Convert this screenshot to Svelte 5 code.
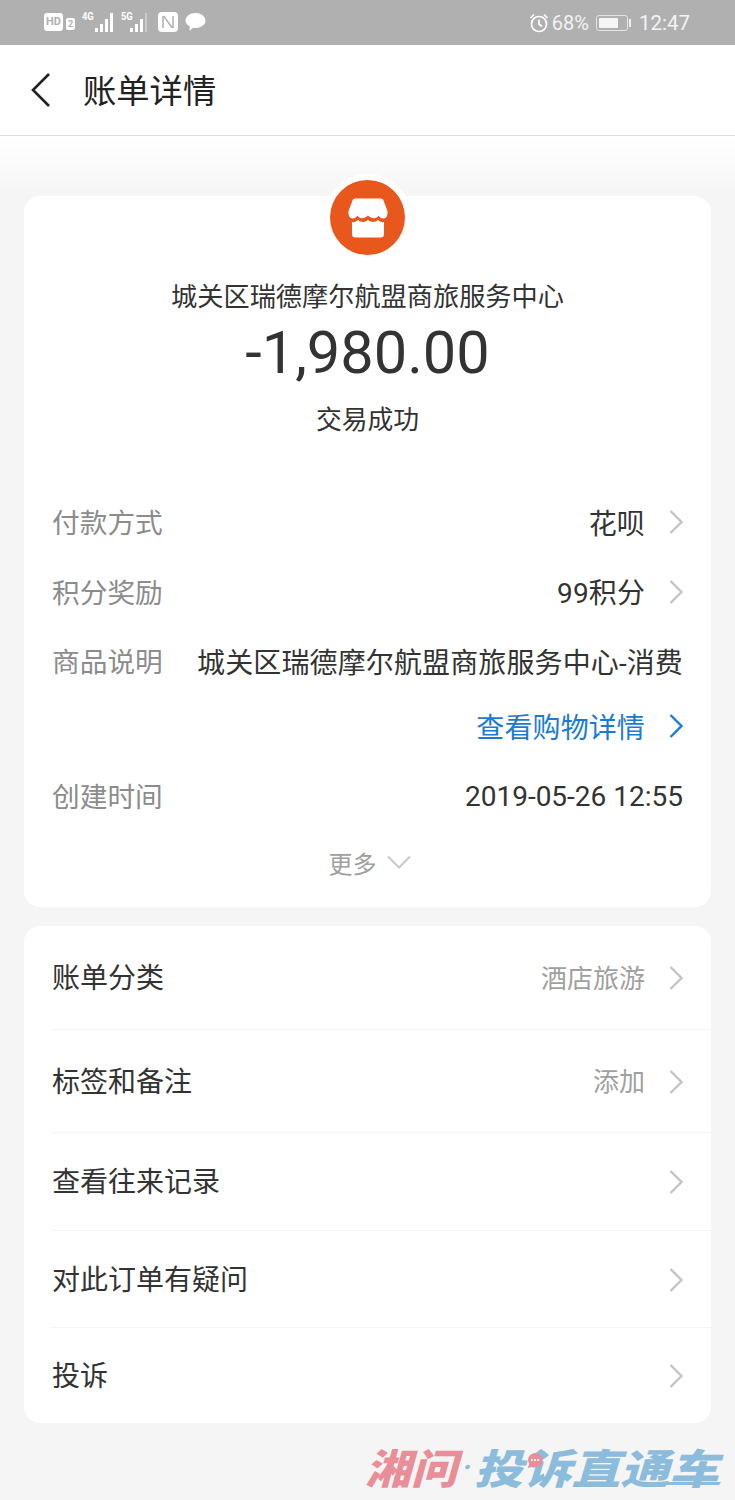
<script>
  const details = [
    { label: '付款方式', value: '花呗', arrow: true, h: 70 },
    { label: '积分奖励', value: '99积分', arrow: true, h: 69 },
    { label: '商品说明', value: '城关区瑞德摩尔航盟商旅服务中心-消费', arrow: false, h: 70 }
  ];
  const menu = [
    { label: '账单分类', value: '酒店旅游', h: 104 },
    { label: '标签和备注', value: '添加', h: 103 },
    { label: '查看往来记录', value: '', h: 98 },
    { label: '对此订单有疑问', value: '', h: 97 },
    { label: '投诉', value: '', h: 95 }
  ];
</script>

{#snippet chevron(cls)}
  <svg class="chev {cls}" viewBox="0 0 16 26" width="16" height="26" aria-hidden="true">
    <path d="M2.500 2 L13.500 13 L2.500 24" fill="none" stroke="currentColor" stroke-width="2.400" />
  </svg>
{/snippet}

<div class="page">
  <div class="status">
    <div class="status-left">
      <span class="hd">HD</span>
      <span class="sim">2</span>
      <span class="net"><i>4G</i>
        <svg viewBox="0 0 20 19" width="20" height="19"><path d="M0 15h3v4H0zM5 11h3v8H5zM10 6h3v13h-3zM15 0h3v19h-3z" fill="#fff"/></svg>
      </span>
      <span class="net second"><i>5G</i>
        <svg viewBox="0 0 20 19" width="20" height="19"><path d="M0 15h3v4H0zM5 11h3v8H5zM10 6h3v13h-3z" fill="#fff"/><path d="M15 0h2v19h-2z" fill="#fff" opacity=".35"/></svg>
      </span>
      <svg class="nfc" viewBox="0 0 20 20" width="20" height="20">
        <rect width="20" height="20" rx="4" fill="#fff"/>
        <path d="M5 4v12M15 4v12M6 4c2 4 6 8 8 12" fill="none" stroke="#b0b0b0" stroke-width="1.500"/>
      </svg>
      <svg class="msg" viewBox="0 0 21 20" width="21" height="20">
        <path d="M10.500 1C16 1 20.500 4.300 20.500 8.500S16 16 10.500 16C9.500 16 8.800 15.900 8 15.700L4.500 19 4.800 14.500C2.200 13.200.5 11 .5 8.500.5 4.300 5 1 10.500 1Z" fill="#fff"/>
      </svg>
    </div>
    <div class="status-right">
      <svg viewBox="0 0 20 20" width="20" height="20">
        <circle cx="10" cy="11" r="7.500" fill="none" stroke="#fff" stroke-width="1.700"/>
        <path d="M10 6.500V11l3 2.500M1.500 5 5 1.500M18.500 5 15 1.500" fill="none" stroke="#fff" stroke-width="1.700"/>
      </svg>
      <span class="pct">68%</span>
      <span class="battery"><span class="fill"></span></span>
      <span class="nub"></span>
      <span class="time">12:47</span>
    </div>
  </div>

  <header class="nav">
    <svg viewBox="0 0 22 36" width="22" height="36" aria-hidden="true">
      <path d="M19 2 L3 18 L19 34" fill="none" stroke="#222" stroke-width="2.600"/>
    </svg>
    <h1>账单详情</h1>
  </header>

  <main>
    <section class="card summary">
      <div class="logo-ring">
        <div class="logo">
          <svg viewBox="0 0 42 42" width="42" height="42" aria-hidden="true">
            <path d="M8 1.500H34Q36 1.500 36.500 3.500L40.500 14Q41 21 37 21.500C34.500 22 33 20.500 31.500 18.500C29.500 22 25 22 21 18.500C17 22 12.500 22 10.500 18.500C9 20.500 7.500 22 5 21.500Q1 21 1.500 14L5.500 3.500Q6 1.500 8 1.500Z" fill="#fff"/>
            <path d="M5 25C7.500 25.500 9.500 24.500 11 23C14 25.500 18 25.500 21 23C24 25.500 28 25.500 31 23C32.500 24.500 34.500 25.500 37 25V37Q37 40.500 33.500 40.500H8.500Q5 40.500 5 37Z" fill="#fff"/>
          </svg>
        </div>
      </div>
      <div class="merchant">城关区瑞德摩尔航盟商旅服务中心</div>
      <div class="amount">-1,980.00</div>
      <div class="state">交易成功</div>

      <div class="details">
        {#each details as row}
          <div class="row" style="height:{row.h}px">
            <span class="label">{row.label}</span>
            <span class="value">{row.value}</span>
            {#if row.arrow}{@render chevron('grey')}{/if}
          </div>
        {/each}
        <div class="row link">
          <span class="value">查看购物详情</span>
          {@render chevron('blue')}
        </div>
        <div class="row created">
          <span class="label">创建时间</span>
          <span class="value date">2019-05-26 12:55</span>
        </div>
      </div>

      <div class="more">
        <span>更多</span>
        <svg viewBox="0 0 26 16" width="26" height="16" aria-hidden="true">
          <path d="M2 2.500 L13 13.500 L24 2.500" fill="none" stroke="#c9c9c9" stroke-width="2"/>
        </svg>
      </div>
    </section>

    <section class="card list">
      {#each menu as item, i}
        <div class="item" class:ruled={i < menu.length - 1} style="height:{item.h}px">
          <span class="item-label">{item.label}</span>
          {#if item.value}<span class="item-value">{item.value}</span>{/if}
          {@render chevron('grey')}
        </div>
      {/each}
    </section>
  </main>

  <div class="mark">
    <b class="pink">湘问</b><b class="sep">·</b><b class="blue-mark">投诉直通车</b>
    <span class="tail"></span>
    <svg class="bubble" viewBox="0 0 20 20" width="18" height="18" aria-hidden="true">
      <path d="M10 1a8.500 8 0 1 1-4 15L2 18l1.500-5A8.500 8 0 0 1 10 1Z" fill="#e98e98"/>
      <circle cx="6.500" cy="9" r="1.200" fill="#fff"/><circle cx="10" cy="9" r="1.200" fill="#fff"/><circle cx="13.500" cy="9" r="1.200" fill="#fff"/>
    </svg>
  </div>
</div>

<style>
  :global(body) {
    margin: 0;
    background: #f5f5f5;
  }
  .page {
    position: relative;
    width: 735px;
    height: 1500px;
    overflow: hidden;
    background: #f5f5f5;
    font-family: Roboto, "Noto Sans CJK SC", sans-serif;
    color: #333;
  }
  .status {
    height: 45px;
    background: #b0b0b0;
    color: #fff;
    display: flex;
    align-items: center;
    justify-content: space-between;
    padding: 0 45px 0 44px;
  }
  .status-left, .status-right {
    display: flex;
    align-items: center;
  }
  .status-left { margin-top: -1px; }
  .hd {
    width: 19px;
    height: 18px;
    background: #fff;
    color: #b0b0b0;
    border-radius: 3px;
    font: 700 11px/18px Roboto, sans-serif;
    text-align: center;
  }
  .sim {
    width: 9px;
    height: 12px;
    margin: 4px 0 0 3px;
    background: #fff;
    color: #b0b0b0;
    border-radius: 2px;
    font: 700 9px/12px Roboto, sans-serif;
    text-align: center;
  }
  .net {
    position: relative;
    margin-left: 7px;
    width: 31px;
    height: 20px;
    display: flex;
    justify-content: flex-end;
    align-items: flex-end;
  }
  .net.second { margin-left: 8px; width: 27px; }
  .net i {
    position: absolute;
    left: 0;
    top: -1px;
    font: 700 11px/12px Roboto, sans-serif;
    transform: scaleX(.85);
    transform-origin: left;
  }
  .net svg { margin-right: -2px; }
  .nfc { margin-left: 10px; }
  .msg { margin-left: 7px; }
  .status-right svg { margin-right: 3px; }
  .pct {
    font: 20px Roboto, sans-serif;
    color: #f3f3f3;
  }
  .battery {
    margin-left: 7px;
    width: 32px;
    height: 16px;
    border: 1px solid #e4e4e4;
    border-radius: 3px;
    padding: 2px;
    box-sizing: border-box;
    display: flex;
  }
  .fill { width: 19px; background: #f5f5f5; border-radius: 1px; }
  .nub { width: 2px; height: 8px; background: #eee; margin: 0 0 0 1px; }
  .time {
    margin-left: 8px;
    font: 20.500px Roboto, sans-serif;
    color: #f3f3f3;
  }

  .nav {
    height: 90px;
    background: #fff;
    border-bottom: 1px solid #dedede;
    display: flex;
    align-items: center;
    padding-left: 30px;
  }
  h1 {
    margin: 0 0 4px 31px;
    font-size: 33.300px;
    font-weight: 400;
    color: #222;
  }
  main {
    padding: 60px 24px 0;
    background: linear-gradient(#fff 0, #f5f5f5 60px) no-repeat;
    display: flex;
    flex-direction: column;
    gap: 19px;
  }
  .card {
    background: #fff;
    border-radius: 16px;
  }
  .summary {
    height: 711px;
    display: flex;
    flex-direction: column;
    align-items: center;
  }
  .logo-ring {
    margin-top: -22px;
    padding: 6px;
    border-radius: 50%;
    background: #fff;
  }
  .logo {
    width: 75px;
    height: 75px;
    border-radius: 50%;
    background: #e8581c;
    display: flex;
    align-items: center;
    justify-content: center;
  }
  .merchant {
    margin-top: 17px;
    font-size: 26.200px;
    line-height: 38px;
    color: #333;
  }
  .amount {
    margin-top: 2px;
    font-size: 59.500px;
    line-height: 70px;
    color: #333;
  }
  .state {
    margin-top: 14px;
    font-size: 25.800px;
    line-height: 36px;
    color: #333;
  }
  .details {
    align-self: stretch;
    margin-top: 49px;
    padding: 0 28px;
  }
  .row {
    display: flex;
    align-items: center;
  }
  .label {
    font-size: 27.700px;
    color: #8c8c8c;
    padding-bottom: 2px;
  }
  .value {
    margin-left: auto;
    font-size: 28px;
    letter-spacing: .12px;
    color: #333;
    padding-bottom: 1px;
  }
  .date { font-size: 28px; letter-spacing: 0; padding-bottom: 0; }
  .chev { flex: none; margin-right: -1px; }
  .chev.grey { color: #c4c4c4; margin-left: 23px; }
  .chev.blue { color: #1a7bd6; margin-left: 23px; stroke-width: 3; }
  .row.link { height: 60px; }
  .row.link .value { color: #1a7bd6; }
  .row.created { height: 70px; margin-top: 5px; }
  .more {
    margin-top: 5px;
    height: 52px;
    display: flex;
    align-items: center;
    gap: 9px;
    margin-left: 5px;
    font-size: 24px;
    color: #a0a0a0;
  }
  .list {
    height: 497px;
    padding-left: 28px;
  }
  .item {
    box-sizing: border-box;
    padding-right: 28px;
    display: flex;
    align-items: center;
  }
  .item.ruled { border-bottom: 1px solid #f4f4f4; }
  .item-label {
    font-size: 28px;
    color: #333;
    padding-bottom: 3px;
  }
  .item-value {
    margin-left: auto;
    font-size: 26px;
    color: #a0a0a0;
    padding-bottom: 3px;
  }
  .item .chev { margin-top: 1px; }
  .item-value + .chev { margin-left: 23px; }
  .item-label + .chev { margin-left: auto; }
  .mark {
    position: absolute;
    left: 365px;
    top: 1439px;
    width: 360px;
    height: 54px;
    font-family: "Noto Sans CJK SC", sans-serif;
    font-size: 41px;
    line-height: 54px;
    font-style: italic;
    white-space: nowrap;
    display: flex;
  }
  .pink, .blue-mark {
    display: block;
    flex: none;
    font-weight: 900;
    transform-origin: left;
  }
  .pink { color: #e98e98; width: 93px; transform: scaleX(1.12); }
  .sep { color: #8cbcdb; width: 16px; font-size: 16px; font-weight: 900; }
  .blue-mark { color: #8cbcdb; transform: scaleX(1.19); }
  .tail {
    position: absolute;
    left: 300px;
    top: 43px;
    width: 55px;
    height: 3px;
    background: #8cbcdb;
    transform: skewX(-30deg);
  }
  .bubble {
    position: absolute;
    left: 161px;
    top: 13px;
  }
</style>
